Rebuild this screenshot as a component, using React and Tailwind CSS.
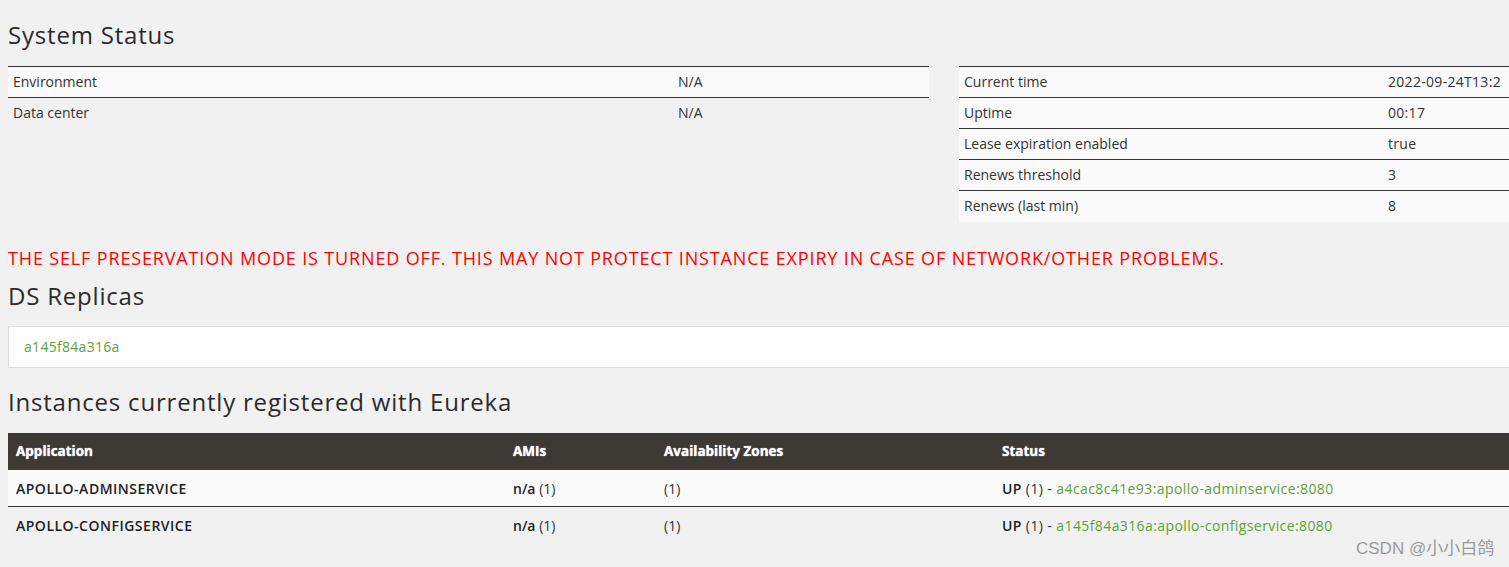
const body = { fontFamily: '"Open Sans", "Liberation Sans", sans-serif' };
const head = { fontFamily: '"Open Sans", "Noto Sans", sans-serif' };

const leftRows = [
  ["Environment", "N/A"],
  ["Data center", "N/A"],
];

const rightRows = [
  ["Current time", "2022-09-24T13:2"],
  ["Uptime", "00:17"],
  ["Lease expiration enabled", "true"],
  ["Renews threshold", "3"],
  ["Renews (last min)", "8"],
];

const apps = [
  { name: "APOLLO-ADMINSERVICE", link: "a4cac8c41e93:apollo-adminservice:8080" },
  { name: "APOLLO-CONFIGSERVICE", link: "a145f84a316a:apollo-configservice:8080" },
];

function App() {
  return (
    <div className="relative w-[1509px] h-[567px] overflow-hidden bg-[#f1f1f1] text-[#333]" style={body}>
      <div className="w-[1880px] pl-[8px]">
        {/* system status */}
        <h2 className="pt-[20px] text-[24px] leading-[30px] font-medium tracking-[0.8px] text-[#2b2b2b]" style={head}>
          System Status
        </h2>
        <div className="flex gap-[30px] mt-[16px]">
          <div className="w-[921px] self-start border-t border-[#333]">
            {leftRows.map(function (r, i) {
              return (
                <div
                  key={r[0]}
                  className={`flex h-[31px] items-center pb-[2px] text-[14px] ${i === 0 ? "bg-[#fafafa] border-b border-[#333]" : ""}`}
                >
                  <div className="w-[670px] pl-[5px]">{r[0]}</div>
                  <div>{r[1]}</div>
                </div>
              );
            })}
          </div>
          <div className="w-[921px] border-t border-[#333] bg-[#fafafa]">
            {rightRows.map(function (r, i) {
              return (
                <div
                  key={r[0]}
                  className={`flex h-[31px] items-center pb-[2px] text-[14px] ${i < rightRows.length - 1 ? "border-b border-[#333]" : ""}`}
                >
                  <div className="w-[429px] pl-[5px]">{r[0]}</div>
                  <div className="tracking-[0.3px]">{r[1]}</div>
                </div>
              );
            })}
          </div>
        </div>

        {/* warning */}
        <p className="mt-[23px] text-[18px] leading-[26px] tracking-[0.85px] text-[#ff0000] whitespace-nowrap">
          THE SELF PRESERVATION MODE IS TURNED OFF. THIS MAY NOT PROTECT INSTANCE EXPIRY IN CASE OF NETWORK/OTHER PROBLEMS.
        </p>

        {/* replicas */}
        <h2 className="mt-[10px] text-[24px] leading-[30px] font-medium tracking-[0.8px] text-[#2b2b2b]" style={head}>
          DS Replicas
        </h2>
        <div className="mt-[15px] h-[42px] flex items-center pb-[2px] bg-white border border-[#dddddd] pl-[15px]">
          <span className="text-[14px] tracking-[0.3px] text-[#5fa134]">a145f84a316a</span>
        </div>

        {/* instances */}
        <h2 className="mt-[19px] text-[24px] leading-[30px] font-medium tracking-[0.8px] text-[#2b2b2b]" style={head}>
          Instances currently registered with Eureka
        </h2>
        <div className="mt-[16px]">
          <div className="flex h-[37px] items-center pb-[1px] bg-[#3d3935] text-white text-[13.5px] font-bold [text-shadow:0_0_1px_#fff]">
            <div className="w-[505px] pl-[8px]">Application</div>
            <div className="w-[151px]">AMIs</div>
            <div className="w-[338px]">Availability Zones</div>
            <div>Status</div>
          </div>
          {apps.map(function (a, i) {
            return (
              <div
                key={a.name}
                className={`flex h-[37px] items-center text-[14px] ${i === 0 ? "bg-[#fafafa] border-b border-[#333]" : ""}`}
              >
                <div className="w-[505px] pl-[8px] font-semibold tracking-[0.5px] text-[#222]">{a.name}</div>
                <div className="w-[151px]">
                  <b className="font-semibold text-[#222]">n/a</b> <span>(1)</span>
                </div>
                <div className="w-[338px]">(1)</div>
                <div className="tracking-[0.4px]">
                  <b className="font-semibold text-[#222]">UP</b> (1) -{" "}
                  <span className="text-[#5fa134]">{a.link}</span>
                </div>
              </div>
            );
          })}
        </div>
      </div>

      {/* watermark */}
      <div
        className="absolute left-[1356px] top-[536px] text-[17px] text-[#9a9a9a]"
        style={{ fontFamily: '"Liberation Sans", "Noto Sans CJK SC", sans-serif' }}
      >
        CSDN @小小白鸽
      </div>
    </div>
  );
}

export default App;
